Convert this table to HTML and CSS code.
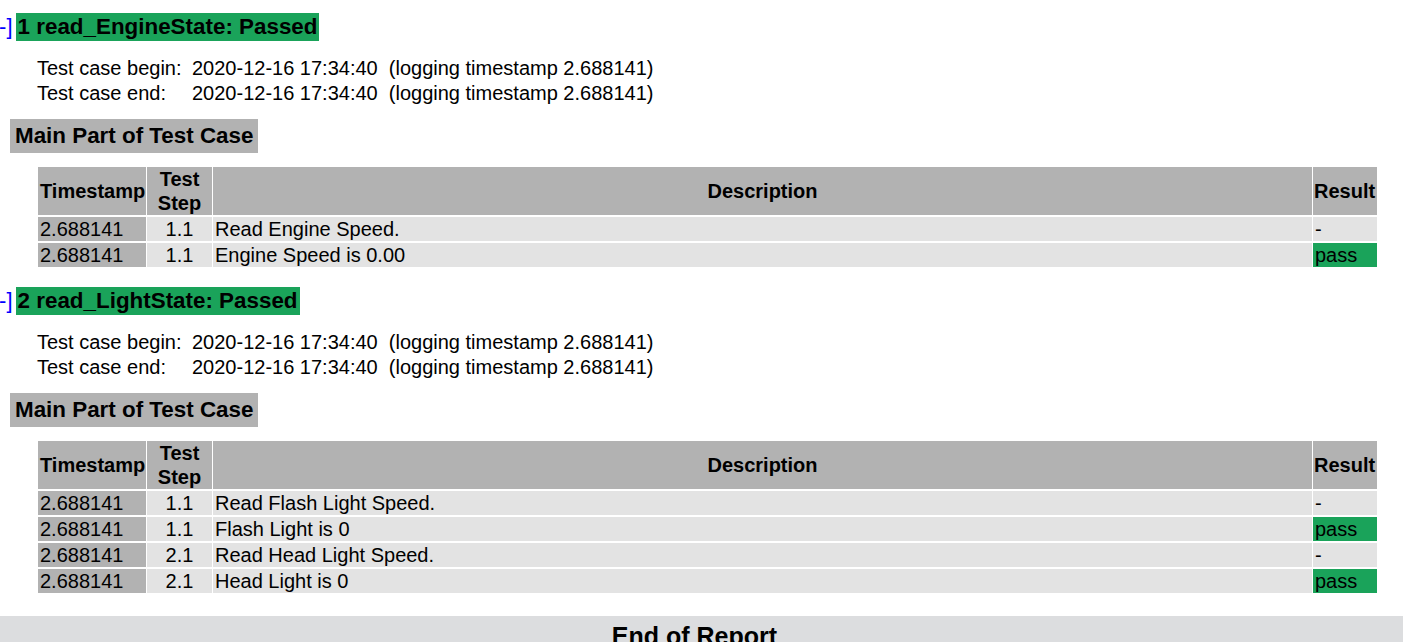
FILE: index.html
```html
<!DOCTYPE html>
<html>
<head>
<meta charset="utf-8">
<link rel="stylesheet" href="styles.css">
</head>
<body>
<div class="page">
  <div class="tc-head">
    <span class="toggle">[-]</span>
    <h2 class="tc-title">1 read_EngineState: Passed</h2>
  </div>
  <div class="info">
    <div class="info-row"><span class="lbl">Test case begin:</span><span>2020-12-16 17:34:40&nbsp;&nbsp;(logging timestamp 2.688141)</span></div>
    <div class="info-row"><span class="lbl">Test case end:</span><span>2020-12-16 17:34:40&nbsp;&nbsp;(logging timestamp 2.688141)</span></div>
  </div>
  <h3 class="part">Main Part of Test Case</h3>
  <table class="steps">
    <colgroup><col class="c-ts"><col class="c-step"><col><col class="c-res"></colgroup>
    <thead>
      <tr><th>Timestamp</th><th>Test<br>Step</th><th>Description</th><th>Result</th></tr>
    </thead>
    <tbody>
      <tr><td class="ts">2.688141</td><td class="step">1.1</td><td>Read Engine Speed.</td><td>-</td></tr>
      <tr><td class="ts">2.688141</td><td class="step">1.1</td><td>Engine Speed is 0.00</td><td class="pass">pass</td></tr>
    </tbody>
  </table>

  <div class="tc-head tc-head2">
    <span class="toggle">[-]</span>
    <h2 class="tc-title">2 read_LightState: Passed</h2>
  </div>
  <div class="info">
    <div class="info-row"><span class="lbl">Test case begin:</span><span>2020-12-16 17:34:40&nbsp;&nbsp;(logging timestamp 2.688141)</span></div>
    <div class="info-row"><span class="lbl">Test case end:</span><span>2020-12-16 17:34:40&nbsp;&nbsp;(logging timestamp 2.688141)</span></div>
  </div>
  <h3 class="part">Main Part of Test Case</h3>
  <table class="steps">
    <colgroup><col class="c-ts"><col class="c-step"><col><col class="c-res"></colgroup>
    <thead>
      <tr><th>Timestamp</th><th>Test<br>Step</th><th>Description</th><th>Result</th></tr>
    </thead>
    <tbody>
      <tr><td class="ts">2.688141</td><td class="step">1.1</td><td>Read Flash Light Speed.</td><td>-</td></tr>
      <tr><td class="ts">2.688141</td><td class="step">1.1</td><td>Flash Light is 0</td><td class="pass">pass</td></tr>
      <tr><td class="ts">2.688141</td><td class="step">2.1</td><td>Read Head Light Speed.</td><td>-</td></tr>
      <tr><td class="ts">2.688141</td><td class="step">2.1</td><td>Head Light is 0</td><td class="pass">pass</td></tr>
    </tbody>
  </table>

  <div class="end">End of Report</div>
</div>
</body>
</html>
```

FILE: styles.css
```css
html, body {
  margin: 0;
  padding: 0;
  background: #ffffff;
  overflow: hidden;
}
body {
  font-family: "Liberation Sans", Arial, sans-serif;
  color: #000000;
  font-size: 20px;
}
.page {
  margin-left: -14px;
  width: 1417px;
  padding-top: 13px;
}
.tc-head {
  display: flex;
  align-items: center;
  height: 28px;
  margin-left: 7px;
}
.tc-head2 {
  margin-top: 18px;
}
.toggle {
  color: #0000ff;
  font-size: 22px;
  line-height: 26px;
  margin-right: 3px;
}
.tc-title {
  margin: 0;
  font-size: 22.4px;
  font-weight: bold;
  line-height: 28px;
  background: #1aa35a;
  padding: 0 2px;
}
.info {
  margin-top: 15px;
  margin-left: 51px;
}
.info-row {
  display: flex;
  line-height: 25px;
  height: 25px;
}
.lbl {
  width: 155px;
}
.part {
  display: inline-block;
  margin: 13px 0 0 24px;
  font-size: 22.4px;
  font-weight: bold;
  line-height: 34px;
  background: #b2b2b2;
  padding: 0 5px;
}
.steps {
  margin: 12px 0 0 51px;
  width: 1341px;
  table-layout: fixed;
  border-collapse: separate;
  border-spacing: 1px 2px;
  font-size: 20px;
}
.c-ts { width: 108px; }
.c-step { width: 65px; }
.c-res { width: 64px; }
.steps th {
  background: #b2b2b2;
  font-weight: bold;
  line-height: 24px;
  padding: 0 1px;
  text-align: center;
  vertical-align: middle;
  white-space: nowrap;
}
.steps th:first-child {
  text-align: left;
  padding-left: 2px;
  padding-right: 0;
}
.steps th:last-child {
  text-align: left;
}
.steps td {
  background: #e3e3e3;
  line-height: 24px;
  height: 24px;
  padding: 0 2px;
  white-space: nowrap;
}
.steps td.ts {
  background: #b2b2b2;
}
.steps td.step {
  text-align: center;
}
.steps td.pass {
  background: #1aa35a;
}
.end {
  margin-top: 21px;
  background: #dcdddf;
  text-align: center;
  font-size: 25px;
  font-weight: bold;
  line-height: 36px;
  padding-top: 2px;
  height: 40px;
}
```
